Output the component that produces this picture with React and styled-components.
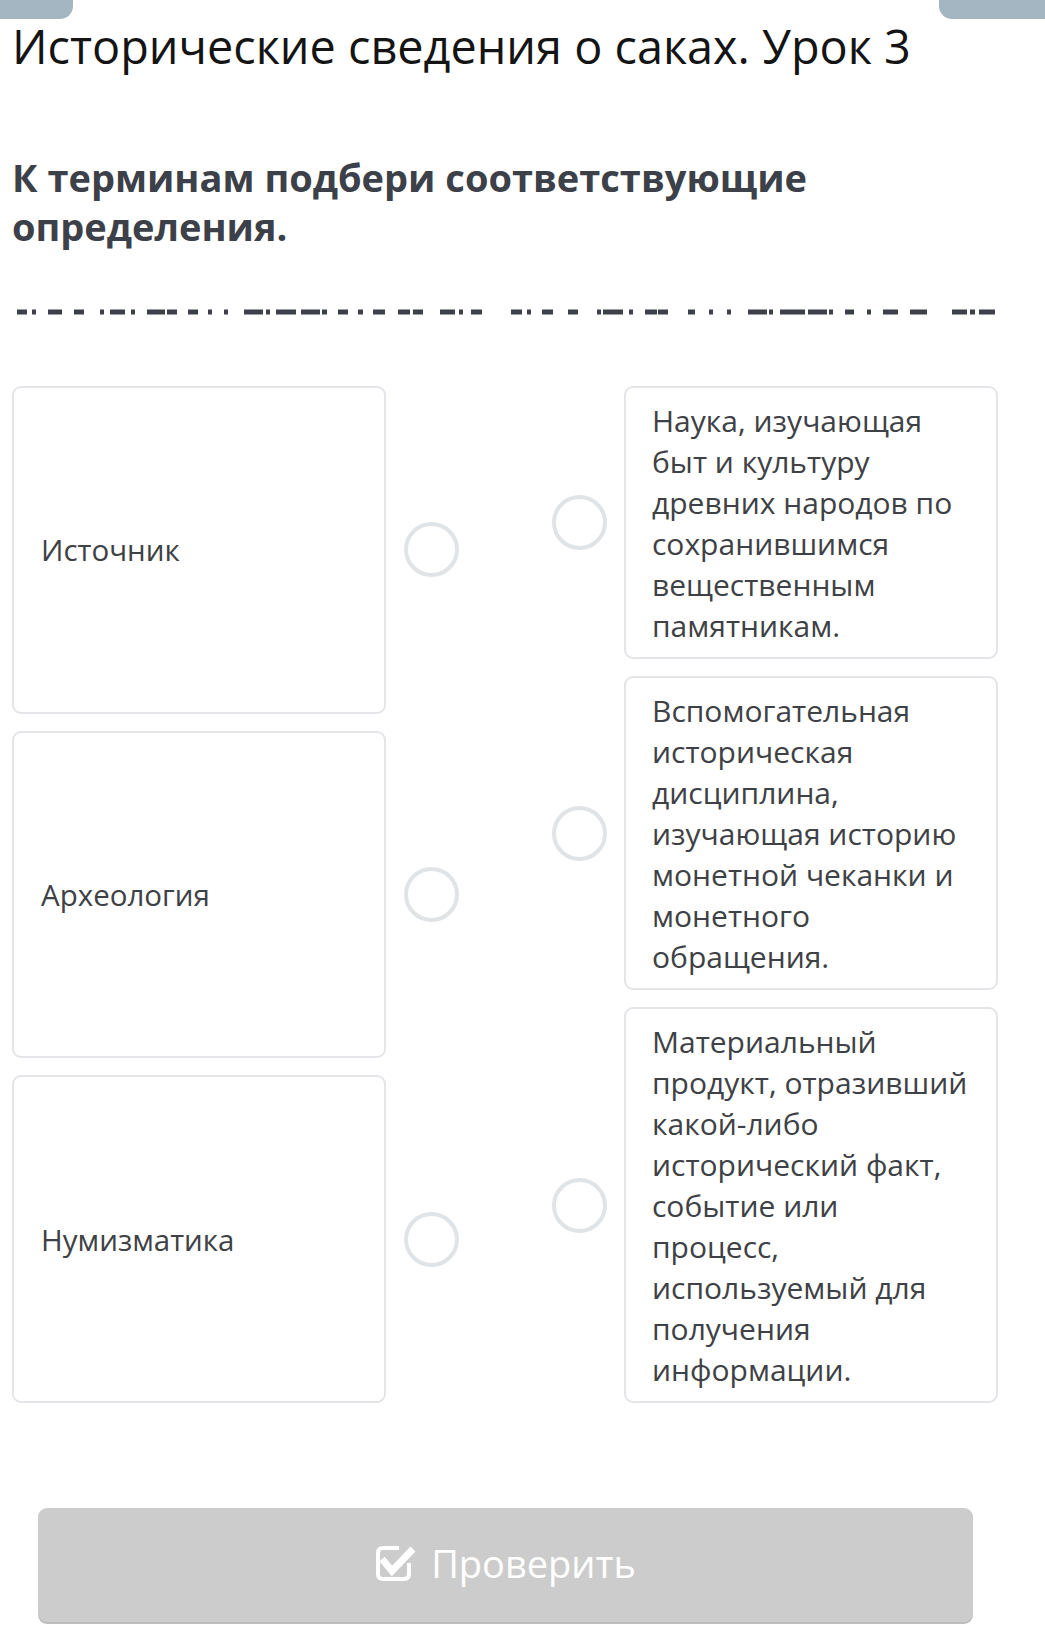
import React from "react";
import styled, { createGlobalStyle } from "styled-components";

const Global = createGlobalStyle`
  html, body { margin: 0; padding: 0; background: #ffffff; }
  body { font-family: "Open Sans", "Noto Sans", sans-serif; }
  * { box-sizing: border-box; }
`;

const Page = styled.div`
  width: 1045px;
  min-height: 1635px;
  background: #fff;
  display: flex;
  flex-direction: column;
`;

const TopBar = styled.div`
  height: 19px;
  display: flex;
  justify-content: space-between;
`;

const Tab = styled.div`
  width: ${(p) => p.$w}px;
  height: 19px;
  background: #a3b6c2;
  border-bottom-left-radius: ${(p) => (p.$side === "right" ? 13 : 0)}px;
  border-bottom-right-radius: ${(p) => (p.$side === "left" ? 13 : 0)}px;
`;

const Content = styled.div`
  padding: 0 46px 0 12px;
  display: flex;
  flex-direction: column;
`;

const Title = styled.h1`
  margin: 0;
  font-family: "Open Sans", sans-serif;
  font-weight: 400;
  font-size: 46.8px;
  line-height: 55px;
  color: #141414;
  white-space: nowrap;
`;

const Question = styled.h2`
  margin: 79px 0 0 0;
  font-family: "Open Sans", sans-serif;
  font-weight: 700;
  font-size: 38px;
  line-height: 49px;
  color: #3c4048;
  width: 900px;
`;

const DashSvg = styled.svg`
  display: block;
  margin-top: 58px;
`;

const MatchArea = styled.div`
  margin-top: 71px;
  display: flex;
  justify-content: space-between;
  align-items: stretch;
`;

const Column = styled.div`
  display: flex;
  flex-direction: column;
  gap: 17px;
  width: 447px;
`;

const Item = styled.div`
  display: flex;
  align-items: center;
  gap: ${(p) => (p.$right ? 17 : 18)}px;
  flex: ${(p) => (p.$right ? "none" : "1")};
`;

const Card = styled.div`
  width: 374px;
  border: 2px solid #e3e5e8;
  border-radius: 9px;
  background: #fff;
  font-family: "Open Sans", sans-serif;
  font-size: 30px;
  line-height: 41px;
  color: #3e4145;
`;

const TermCard = styled(Card)`
  align-self: stretch;
  display: flex;
  align-items: center;
  padding: 0 27px;
  font-size: 29.5px;
`;

const DefCard = styled(Card)`
  padding: 11.5px 24px 11.5px 26px;
`;

const Circle = styled.div`
  flex: none;
  width: 55px;
  height: 55px;
  border-radius: 50%;
  border: 4px solid #e1e4e7;
  background: #fff;
`;

const CheckButton = styled.button`
  margin: 105px 26px 0 26px;
  height: 114px;
  border: none;
  border-radius: 9px;
  background: #cccccc;
  box-shadow: 0 2px 0 #bdbdbd;
  display: flex;
  align-items: center;
  justify-content: center;
  gap: 16px;
  color: #ffffff;
  font-family: "Open Sans", sans-serif;
  font-size: 38px;
  padding: 0 0 4px 0;
  cursor: default;
`;

const group1 = [
  [17, 27], [32, 36], [48, 62], [74, 84], [100, 104], [110, 125], [131, 135],
  [147, 165], [167, 177], [188, 198], [208, 212], [224, 228], [244, 263],
  [266, 270], [276, 296], [301, 320], [322, 327], [338, 348], [358, 363],
  [373, 385], [398, 410], [413, 423], [440, 455], [459, 463], [471, 482],
];
const group2 = [
  [511, 522], [527, 531], [542, 553], [568, 578], [597, 601], [603, 623],
  [629, 633], [645, 657], [658, 668], [688, 695], [709, 713], [727, 731],
  [748, 767], [769, 773], [780, 805], [808, 827], [829, 833], [845, 854],
  [867, 871], [883, 898], [910, 927], [952, 967], [970, 975], [979, 995],
];

function DashLine() {
  const all = [...group1, ...group2];
  return (
    <DashSvg width="1000" height="6" viewBox="0 0 1000 6">
      {all.map(([a, b], i) => (
        <rect key={i} x={a - 12} y="0.5" width={b - a} height="5" fill="#3c4048" />
      ))}
    </DashSvg>
  );
}

function CheckIcon() {
  return (
    <svg width="40" height="38" viewBox="0 0 40 38" fill="none">
      <path
        d="M24 4 H8 Q3 4 3 9 V30 Q3 35 8 35 H29 Q34 35 34 30 V19"
        stroke="#fff"
        strokeWidth="4"
        strokeLinejoin="round"
      />
      <path d="M7 15 L17 27 L38 5" stroke="#fff" strokeWidth="7" strokeLinejoin="miter" />
    </svg>
  );
}

const terms = ["Источник", "Археология", "Нумизматика"];
const defs = [
  "Наука, изучающая быт и культуру древних народов по сохранившимся вещественным памятникам.",
  "Вспомогательная историческая дисциплина, изучающая историю монетной чеканки и монетного обращения.",
  "Материальный продукт, отразивший какой-либо исторический факт, событие или процесс, используемый для получения информации.",
];

export default function App() {
  return (
    <>
      <Global />
      <Page>
        <TopBar>
          <Tab $w={73} $side="left" />
          <Tab $w={106} $side="right" />
        </TopBar>
        <Content>
          <Title>Исторические сведения о саках. Урок 3</Title>
          <Question>К терминам подбери соответствующие определения.</Question>
          <DashLine />
          <MatchArea>
            <Column>
              {terms.map((t) => (
                <Item key={t}>
                  <TermCard>{t}</TermCard>
                  <Circle />
                </Item>
              ))}
            </Column>
            <Column>
              {defs.map((d, i) => (
                <Item key={i} $right>
                  <Circle />
                  <DefCard>{d}</DefCard>
                </Item>
              ))}
            </Column>
          </MatchArea>
          <CheckButton type="button">
            <CheckIcon />
            <span>Проверить</span>
          </CheckButton>
        </Content>
      </Page>
    </>
  );
}
